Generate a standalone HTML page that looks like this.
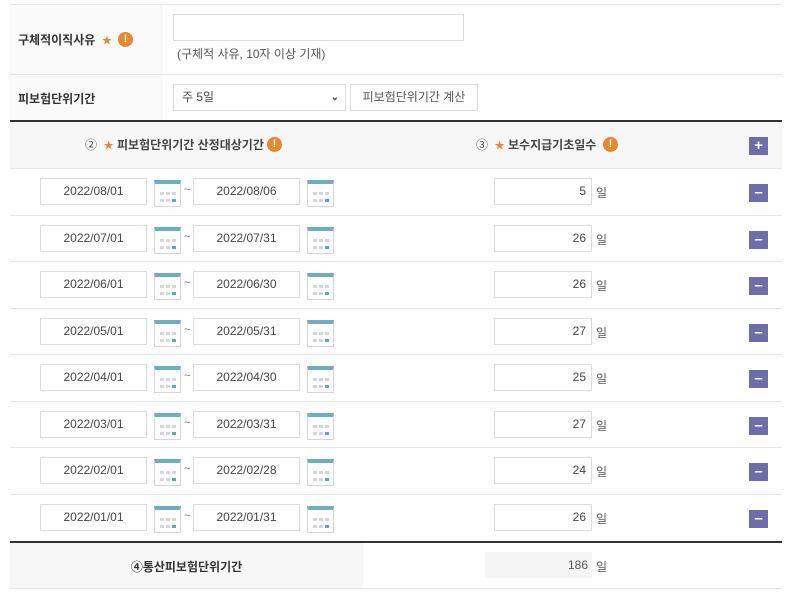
<!DOCTYPE html>
<html><head><meta charset="utf-8">
<style>
*{box-sizing:border-box;margin:0;padding:0}
body{width:800px;height:594px;background:#fff;position:relative;overflow:hidden;font-family:"Liberation Sans","Noto Sans CJK KR",sans-serif;font-size:12px;color:#333}
.a{position:absolute}
.hl{position:absolute;left:10px;width:772px;height:1px;background:#e6e6e6}
.inp{position:absolute;height:27px;border:1px solid #dcdcdc;background:#fff;font-size:12px;color:#444;line-height:25px}
.cal{position:absolute;width:27px;height:27px;border:1px solid #d6d6d6;border-top:4px solid #6eafbf;background:#fff}
.cal i{position:absolute;width:4px;height:3px;background:#d4d6da}
.cal i.b{background:#5aa8c4}
.btn{position:absolute;width:19px;height:18px;background:#6b6eab;color:#fff;text-align:center;line-height:18px;font-weight:bold;font-size:15px}
.ex{position:absolute;width:15px;height:15px;border-radius:50%;background:#e8872d;color:#fff;font-size:11px;font-weight:bold;text-align:center;line-height:15px}
.st{color:#e8872d;font-size:10px}
b{font-weight:bold}
</style></head><body>
<div class="a" style="left:10px;top:4px;width:153px;height:117px;background:#f9f9f9"></div>
<div class="hl" style="top:4px;background:#e8e8e8"></div>
<div class="hl" style="top:74px"></div>
<div class="a" style="left:18px;top:31px;font-weight:bold;font-size:12px">구체적이직사유 &nbsp;<span class="st">★</span></div>
<div class="ex" style="left:118px;top:32px">!</div>
<div class="inp" style="left:173px;top:14px;width:291px"></div>
<div class="a" style="left:177px;top:45px;color:#555">(구체적 사유, 10자 이상 기재)</div>
<div class="a" style="left:18px;top:90px;font-weight:bold">피보험단위기간</div>
<div class="inp" style="left:173px;top:84px;width:173px;padding-left:8px">주 5일<span style="position:absolute;right:6px;top:0;font-size:10px;font-weight:bold">&#8964;</span></div>
<div class="inp" style="left:350px;top:84px;width:128px;text-align:center;color:#555">피보험단위기간 계산</div>
<div class="a" style="left:10px;top:120px;width:772px;height:2px;background:#333"></div>
<div class="a" style="left:10px;top:122px;width:772px;height:46px;background:#f7f7f7"></div>
<div class="a" style="left:85px;top:136px;color:#444">② &nbsp;<span class="st">★</span> <b>피보험단위기간 산정대상기간</b></div>
<div class="ex" style="left:267px;top:137px">!</div>
<div class="a" style="left:476px;top:136px;color:#444">③ &nbsp;<span class="st">★</span> <b>보수지급기초일수</b></div>
<div class="ex" style="left:603px;top:137px">!</div>
<div class="btn" style="left:749px;top:137px">+</div>
<div id="rows"></div>
<div class="a" style="left:10px;top:541px;width:772px;height:2px;background:#333"></div>
<div class="a" style="left:10px;top:543px;width:353px;height:45px;background:#f7f7f7"></div>
<div class="hl" style="top:588px"></div>
<div class="a" style="left:10px;top:558px;width:353px;text-align:center;font-weight:bold">④통산피보험단위기간</div>
<div class="a" style="left:485px;top:552px;width:107px;height:26px;background:#f5f5f5;text-align:right;padding-right:4px;line-height:26px;color:#555">186</div>
<div class="a" style="left:596px;top:558px;color:#555">일</div>
<script>
var d=[["2022/08/01","2022/08/06","5"],["2022/07/01","2022/07/31","26"],["2022/06/01","2022/06/30","26"],["2022/05/01","2022/05/31","27"],["2022/04/01","2022/04/30","25"],["2022/03/01","2022/03/31","27"],["2022/02/01","2022/02/28","24"],["2022/01/01","2022/01/31","26"]];
var tops=[168,215,261,308,354,401,447,494],h="";
function cal(x,y){var s='<div class="cal" style="left:'+x+'px;top:'+y+'px">';var xs=[5,11,17],ys=[8,15];for(var j=0;j<2;j++)for(var k=0;k<3;k++)s+='<i class="'+(j==1&&k==2?'b':'')+'" style="left:'+xs[k]+'px;top:'+ys[j]+'px"></i>';return s+'</div>';}
for(var i=0;i<8;i++){var t=tops[i];
h+='<div class="hl" style="top:'+t+'px"></div>';
h+='<div class="inp" style="left:40px;top:'+(t+10)+'px;width:107px;text-align:center">'+d[i][0]+'</div>';
h+=cal(154,t+12);
h+='<div class="a" style="left:184px;top:'+(t+16)+'px;font-size:11px;color:#777">~</div>';
h+='<div class="inp" style="left:193px;top:'+(t+10)+'px;width:107px;text-align:center">'+d[i][1]+'</div>';
h+=cal(307,t+12);
h+='<div class="inp" style="left:494px;top:'+(t+10)+'px;width:98px;text-align:right;padding-right:5px">'+d[i][2]+'</div>';
h+='<div class="a" style="left:596px;top:'+(t+16)+'px;color:#555">일</div>';
h+='<div class="btn" style="left:749px;top:'+(t+16)+'px">&#8211;</div>';}
document.getElementById("rows").innerHTML=h;
</script>
</body></html>
